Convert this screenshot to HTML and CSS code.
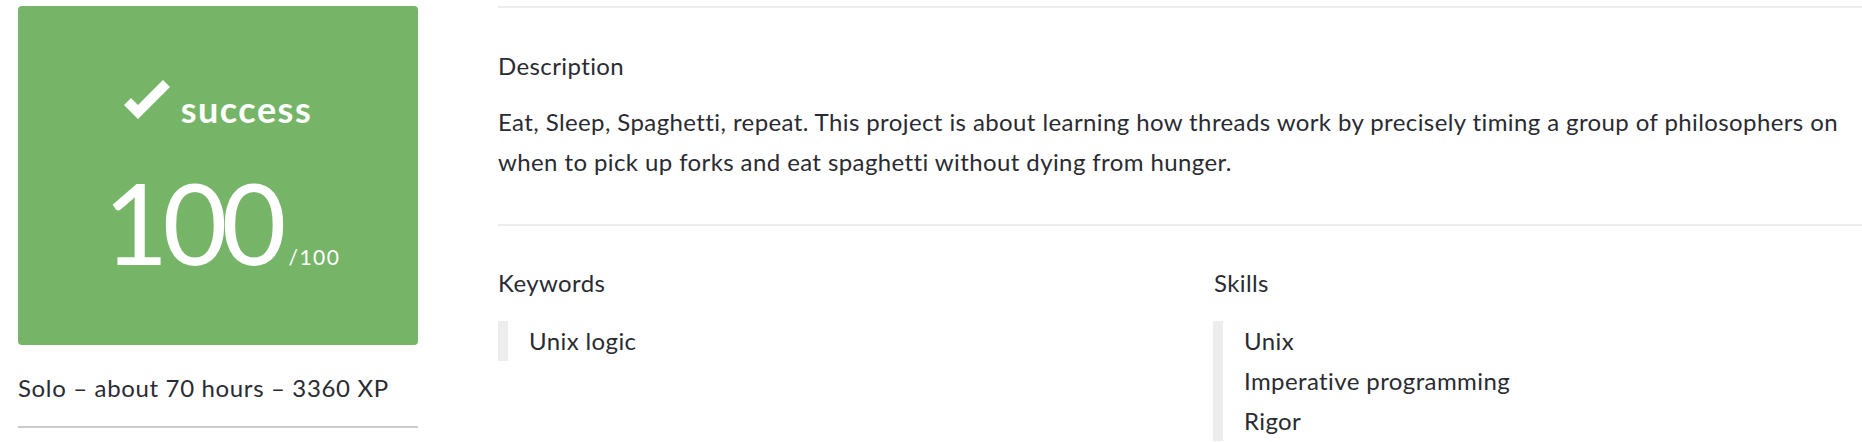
FILE: index.html
```html
<!DOCTYPE html>
<html lang="en">
<head>
<meta charset="utf-8">
<title>Philosophers</title>
<link rel="stylesheet" href="styles.css">
</head>
<body>
<div class="page">
  <aside class="side">
    <div class="score-card">
      <div class="status">
        <svg class="check" width="46" height="40" viewBox="0 0 46 40" aria-hidden="true">
          <polygon points="0,26 7,19 14,26 39,1 46,8 14,40" fill="#ffffff"/>
        </svg>
        <span class="status-text">success</span>
      </div>
      <div class="score">
        <span class="score-value">100</span><span class="score-max">/100</span>
      </div>
    </div>
    <p class="meta-line">Solo – about 70 hours – 3360 XP</p>
  </aside>
  <main class="content">
    <section class="desc">
      <h3 class="label">Description</h3>
      <p class="desc-text">Eat, Sleep, Spaghetti, repeat. This project is about learning how threads work by precisely timing a group of philosophers on when to pick up forks and eat spaghetti without dying from hunger.</p>
    </section>
    <section class="tags">
      <div class="tag-col">
        <h3 class="label">Keywords</h3>
        <ul class="tag-list">
          <li>Unix logic</li>
        </ul>
      </div>
      <div class="tag-col">
        <h3 class="label">Skills</h3>
        <ul class="tag-list">
          <li>Unix</li>
          <li>Imperative programming</li>
          <li>Rigor</li>
        </ul>
      </div>
    </section>
  </main>
</div>
</body>
</html>
```

FILE: styles.css
```css
* {
  box-sizing: border-box;
}

html, body {
  margin: 0;
  padding: 0;
  background: #ffffff;
}

body {
  font-family: "Lato", "Open Sans", sans-serif;
  font-size: 24px;
  line-height: 40px;
  color: #2a2b32;
  letter-spacing: 0.4px;
  overflow: hidden;
}

.page {
  display: flex;
  align-items: flex-start;
}

.side {
  width: 418px;
  padding-left: 18px;
  padding-top: 6px;
  flex: none;
}

.score-card {
  width: 400px;
  height: 339px;
  background: #76b567;
  border-radius: 4px;
  color: #ffffff;
  display: flex;
  flex-direction: column;
  align-items: center;
  padding-top: 73px;
}

.status {
  display: flex;
  align-items: flex-end;
  gap: 11px;
}

.check {
  display: block;
  margin-bottom: 12px;
}

.status-text {
  font-size: 36px;
  line-height: 44px;
  font-weight: 700;
  letter-spacing: 1.5px;
}

.score {
  margin-top: 35px;
  display: flex;
  align-items: baseline;
  padding-left: 8px;
}

.score-value {
  font-size: 112px;
  line-height: 112px;
  font-weight: 400;
  letter-spacing: -6px;
}

.score-max {
  font-size: 21px;
  line-height: 21px;
  font-weight: 400;
  letter-spacing: 1.5px;
  margin-left: 8px;
}

.meta-line {
  margin: 23px 0 0;
  padding-bottom: 18px;
  border-bottom: 2px solid #cccccc;
  letter-spacing: 0.65px;
}

.content {
  flex: 1;
  margin-left: 80px;
  padding-top: 6px;
  min-width: 0;
}

.desc {
  border-top: 2px solid #ededed;
  border-bottom: 2px solid #ededed;
  padding-top: 38px;
  padding-bottom: 42px;
}

.label {
  margin: 0;
  font-size: 24px;
  line-height: 40px;
  font-weight: 400;
}

.desc-text {
  margin: 16px 0 0;
  padding-right: 10px;
}

.tags {
  display: grid;
  grid-template-columns: 716px 1fr;
  padding-top: 37px;
}

.tag-list {
  list-style: none;
  margin: 18px 0 0;
  padding: 0 0 0 21px;
  border-left: 10px solid #ededed;
}

.tag-col + .tag-col .tag-list {
  margin-left: -1px;
}
```
